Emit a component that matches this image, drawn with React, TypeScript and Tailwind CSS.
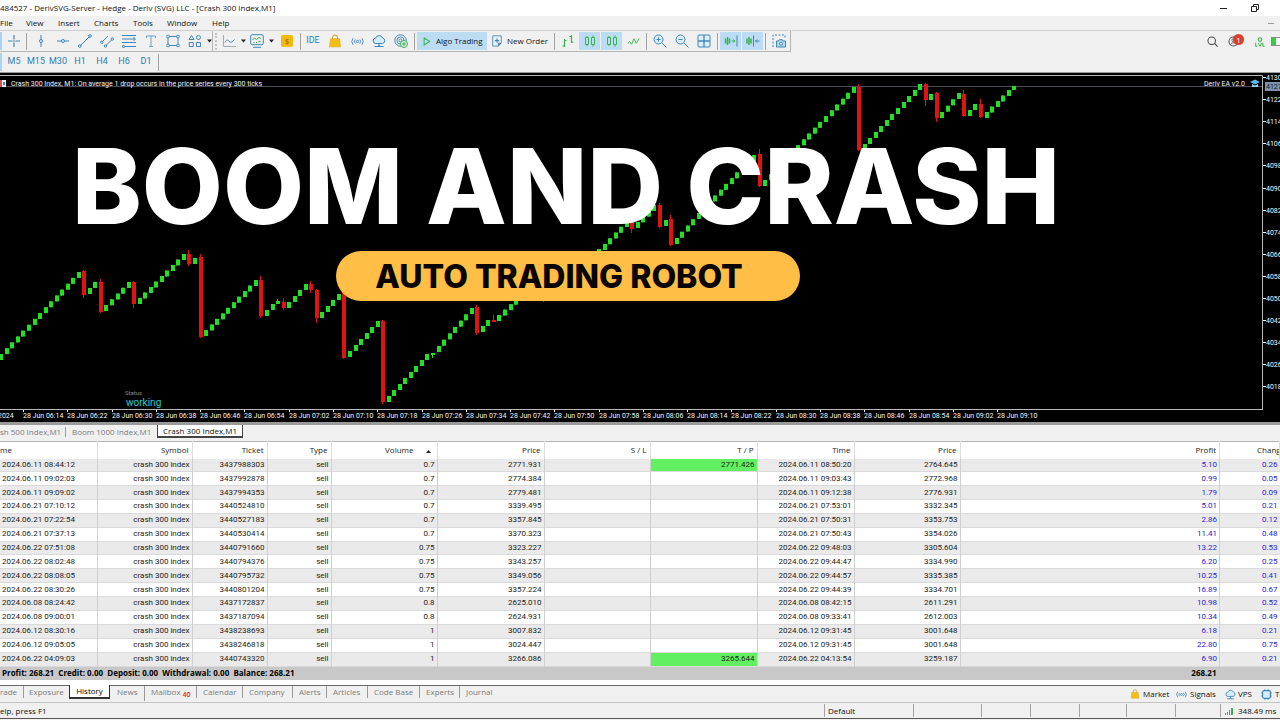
import type { ReactNode } from "react"
import clsx from "clsx"

type Candle = { i: number; up: boolean; top: number; bottom: number; high: number; low: number }

const STEP = 5.535

// Runs of rising candles: first index, first centre, last index, last centre
const RUNS: [number, number, number, number][] = [
  [0, 357, 14, 275],
  [16, 291, 17, 285],
  [19, 308, 23, 285],
  [25, 301, 33, 257],
  [35, 261, 35, 261],
  [37, 333, 46, 283],
  [48, 313, 49, 307],
  [52, 305, 55, 287],
  [58, 315, 61, 297],
  [63, 354, 68, 324],
  [70, 399, 77, 357],
  [79, 349, 85, 311],
  [87, 329, 88, 323],
  [90, 318, 97, 280],
  [99, 298, 108, 252],
  [109, 247, 113, 224],
  [115, 225, 118, 208],
  [120, 223, 120, 223],
  [122, 241, 126, 216],
  [127, 210, 136, 158],
  [138, 183, 154, 90],
  [156, 147, 166, 87],
  [168, 97, 168, 97],
  [170, 115, 173, 96],
  [175, 113, 176, 107],
  [178, 115, 182, 93],
]

// Drops: index, top, bottom, high, low
const DROPS: [number, number, number, number, number][] = [
  [15, 271, 295, 270, 298],
  [18, 282, 312, 279, 313],
  [24, 282, 304, 281, 308],
  [34, 254, 264, 250, 266],
  [36, 257, 337, 254, 338],
  [47, 280, 316, 276, 318],
  [51, 302, 308, 298, 310],
  [56, 284, 290, 281, 293],
  [57, 290, 318, 289, 323],
  [62, 286, 358, 285, 359],
  [69, 321, 402, 320, 404],
  [86, 307, 333, 305, 335],
  [89, 320, 322, 315, 322],
  [98, 280, 301, 279, 302],
  [114, 222, 229, 221, 233],
  [119, 205, 227, 203, 228],
  [121, 219, 245, 215, 246],
  [137, 154, 186, 149, 187],
  [155, 87, 150, 84, 151],
  [167, 84, 100, 83, 106],
  [169, 93, 118, 92, 122],
  [174, 94, 116, 90, 117],
  [177, 104, 117, 99, 118],
]

function buildCandles(): Candle[] {
  const out: Candle[] = []
  for (const [a, ya, b, yb] of RUNS) {
    for (let i = a; i <= b; i++) {
      const y = a === b ? ya : ya + ((yb - ya) * (i - a)) / (b - a)
      out.push({ i, up: true, top: y - 3, bottom: y + 3, high: y - 3, low: y + 3 })
    }
  }
  for (const [i, top, bottom, high, low] of DROPS) {
    out.push({ i, up: false, top, bottom, high, low })
  }
  out.push({ i: 50, up: true, top: 301, bottom: 304, high: 299, low: 304 })
  out.push({ i: 78, up: true, top: 353, bottom: 355, high: 353, low: 358 })
  out.push({ i: 183, up: true, top: 86, bottom: 90, high: 86, low: 90 })
  return out
}

const candles = buildCandles()

const times = [
  "06:14", "06:22", "06:30", "06:38", "06:46", "06:54", "07:02", "07:10", "07:18", "07:26", "07:34", "07:42",
  "07:50", "07:58", "08:06", "08:14", "08:22", "08:30", "08:38", "08:46", "08:54", "09:02", "09:10",
]

const prices = Array.from({ length: 15 }, (_, i) => 4130 - i * 8)

const trades = [
  ["2024.06.11 08:44:12", "3437988303", "0.7", "2771.931", "2771.426", "2024.06.11 08:50:20", "2764.645", "5.10", "0.26"],
  ["2024.06.11 09:02:03", "3437992878", "0.7", "2774.384", "", "2024.06.11 09:03:43", "2772.968", "0.99", "0.05"],
  ["2024.06.11 09:09:02", "3437994353", "0.7", "2779.481", "", "2024.06.11 09:12:38", "2776.931", "1.79", "0.09"],
  ["2024.06.21 07:10:12", "3440524810", "0.7", "3339.495", "", "2024.06.21 07:53:01", "3332.345", "5.01", "0.21"],
  ["2024.06.21 07:22:54", "3440527183", "0.7", "3357.845", "", "2024.06.21 07:50:31", "3353.753", "2.86", "0.12"],
  ["2024.06.21 07:37:13", "3440530414", "0.7", "3370.323", "", "2024.06.21 07:50:43", "3354.026", "11.41", "0.48"],
  ["2024.06.22 07:51:08", "3440791660", "0.75", "3323.227", "", "2024.06.22 09:48:03", "3305.604", "13.22", "0.53"],
  ["2024.06.22 08:02:48", "3440794376", "0.75", "3343.257", "", "2024.06.22 09:44:47", "3334.990", "6.20", "0.25"],
  ["2024.06.22 08:08:05", "3440795732", "0.75", "3349.056", "", "2024.06.22 09:44:57", "3335.385", "10.25", "0.41"],
  ["2024.06.22 08:30:26", "3440801204", "0.75", "3357.224", "", "2024.06.22 09:44:39", "3334.701", "16.89", "0.67"],
  ["2024.06.08 08:24:42", "3437172837", "0.8", "2625.010", "", "2024.06.08 08:42:15", "2611.291", "10.98", "0.52"],
  ["2024.06.08 09:00:01", "3437187094", "0.8", "2624.931", "", "2024.06.08 09:33:41", "2612.003", "10.34", "0.49"],
  ["2024.06.12 08:30:16", "3438238693", "1", "3007.832", "", "2024.06.12 09:31:45", "3001.648", "6.18", "0.21"],
  ["2024.06.12 09:05:05", "3438246818", "1", "3024.447", "", "2024.06.12 09:31:45", "3001.648", "22.80", "0.75"],
  ["2024.06.22 04:09:03", "3440743320", "1", "3266.086", "3265.644", "2024.06.22 04:13:54", "3259.187", "6.90", "0.21"],
]

function Icon({ children, size = 14, color = "#3f86b8" }: { children: ReactNode; size?: number; color?: string }) {
  return (
    <svg width={size} height={size} viewBox="0 0 14 14" fill="none" stroke={color} strokeWidth={1} className="shrink-0">
      {children}
    </svg>
  )
}

function Tool({ label, active, children }: { label: string; active?: boolean; children: ReactNode }) {
  return (
    <button
      aria-label={label}
      className={clsx("flex h-[18px] shrink-0 items-center justify-center", active ? "w-[21px] bg-[#bcdcf4]" : "w-[22px]")}
    >
      {children}
    </button>
  )
}

function Caret() {
  return (
    <button aria-label="More" className="flex w-[6px] shrink-0 items-center justify-center">
      <svg width="5" height="4" viewBox="0 0 5 4">
        <path d="M0 .5h5L2.500 3.500z" fill="#222" />
      </svg>
    </button>
  )
}

function Sep({ className }: { className?: string }) {
  return <span className={clsx("h-[17px] w-px shrink-0 bg-[#a3a3a3]", className)} />
}

function Bag({ size = 14 }: { size?: number }) {
  return (
    <Icon size={size}>
      <path d="M4.500 6V3.500a2.500 2.500 0 0 1 5 0V6" stroke="#c79a10" />
      <path d="M2.500 4.800h9l1 8h-11z" fill="#f5bd14" stroke="#dba50c" strokeWidth=".6" />
    </Icon>
  )
}

function SignalIcon({ size = 13 }: { size?: number }) {
  return (
    <Icon size={size}>
      <circle cx="7" cy="7" r="1.200" />
      <path d="M4.600 4.800a3.200 3.200 0 0 0 0 4.400M9.400 4.800a3.200 3.200 0 0 1 0 4.400M2.200 3.500a5.600 5.600 0 0 0 0 7M11.800 3.500a5.600 5.600 0 0 1 0 7" />
    </Icon>
  )
}

function CloudIcon({ size = 14 }: { size?: number }) {
  return (
    <Icon size={size}>
      <path d="M4 9.500a2.700 2.700 0 0 1-.4-5.400 3.700 3.700 0 0 1 7-.1 2.800 2.800 0 0 1-.2 5.500z" fill="#d5ebf8" />
      <path d="M7 9.500v2.500M2.500 12.500h9M5.500 12.500l1.500-1.200 1.500 1.200" />
    </Icon>
  )
}

function CandlePair() {
  return (
    <Icon color="#35b44a">
      <path d="M2.500 3.500h3v7h-3zM4 2v1.500M4 10.500V12M8.500 3.500h3v7h-3zM10 1.500v2M10 10.500v2" />
    </Icon>
  )
}

function TitleBar() {
  return (
    <header className="flex h-4 items-center justify-between bg-white text-[8px] text-[#111]">
      <h1>484527 - DerivSVG-Server - Hedge - Deriv (SVG) LLC - [Crash 300 Index,M1]</h1>
      <div className="flex items-center gap-6 pr-[21px]">
        <button aria-label="Minimize">
          <svg width="7" height="8" viewBox="0 0 7 8"><path d="M0 4.500h7" stroke="#222" /></svg>
        </button>
        <button aria-label="Restore">
          <svg width="8" height="8" viewBox="0 0 8 8" fill="none" stroke="#222"><path d="M.5 2.500h5v5h-5zM2.500 2.500v-2h5v5h-2" /></svg>
        </button>
      </div>
    </header>
  )
}

const menus = [
  ["File", "w-[26px]"], ["View", "w-8"], ["Insert", "w-9"], ["Charts", "w-[39px]"],
  ["Tools", "w-[34px]"], ["Window", "w-[45px]"], ["Help", "w-8"],
]

function MenuBar() {
  return (
    <nav className="flex h-[15px] items-center border-b border-[#cfcfcf] text-[8px] text-[#111]">
      {menus.map(([m, w]) => (
        <button key={m} className={clsx("shrink-0 text-left", w)}>{m}</button>
      ))}
      <span className="ml-auto mr-[6px] h-px w-[6px] bg-[#999]" />
    </nav>
  )
}

function Toolbar() {
  return (
    <div className="flex h-[21px] items-center">
      <div className="flex h-full items-center border-b border-r border-[#b5b5b5]">
        <span className="mr-px h-[18px] w-[2px] bg-[#a9d3f2]" />
        <Tool label="Crosshair"><Icon><path d="M7 1v4.500M7 8.500V13M1 7h4.500M8.500 7H13" strokeWidth="1.200" /><path d="M6 7h2M7 6v2" strokeWidth=".6" /></Icon></Tool>
        <Sep className="ml-px mr-[3px]" />
        <Tool label="Vertical line"><Icon><path d="M7 1v4.500M7 8.500V13" /><circle cx="7" cy="7" r="1.500" /></Icon></Tool>
        <Tool label="Horizontal line"><Icon><path d="M1 7h4.500M8.500 7H13" /><circle cx="7" cy="7" r="1.500" /></Icon></Tool>
        <Tool label="Trendline"><Icon><path d="M2.500 11.500l9-9" /><circle cx="1.800" cy="12" r="1.300" /><circle cx="12" cy="2" r="1.300" /></Icon></Tool>
        <Tool label="Channel"><Icon><path d="M2.500 7.500l5.500-5.500M6.500 11l5-5" /><circle cx="1.800" cy="8.300" r="1.200" /><circle cx="5.500" cy="12" r="1.200" /><circle cx="12.300" cy="5" r="1.200" /></Icon></Tool>
        <Tool label="Fibonacci"><Icon><path d="M0 1.500h14M0 5h10M0 8.500h14M3 12.500h11" /><circle cx="12" cy="5" r="1.200" /><circle cx="1.500" cy="12.500" r="1.200" /></Icon></Tool>
        <Tool label="Text"><Icon color="#6ba3cb"><path d="M2.500 4V2h9v2M7 2v10.500M5 12.500h4" /></Icon></Tool>
        <Tool label="Rectangle"><Icon><path d="M2 2.500h10v9H2z" /><path d="M.8 1.300h2.400v2.400H.8zM10.800 1.300h2.400v2.400h-2.400zM.8 10.300h2.400v2.400H.8zM10.800 10.300h2.400v2.400h-2.400z" fill="#f0f0f0" strokeWidth=".8" /></Icon></Tool>
        <Tool label="Shapes"><Icon><path d="M3.500 1.500L6 5.500H1zM1.300 8.500h4v4h-4zM8.500 8.500h4v4h-4z" /><circle cx="10.500" cy="3.500" r="2" /></Icon></Tool>
        <Caret />
      </div>
      <div className="flex h-full items-center border-b border-r border-[#b5b5b5]">
        <span className="ml-[2px] mr-px h-[17px] border-l-2 border-dotted border-[#c4c4c4]" />
        <Tool label="Chart type"><Icon><path d="M1.500 1v11.500H14" stroke="#a9a9a9" /><path d="M3 8.500c1.500-3 2.500-3 4-1.300s3 1.300 5.500-1.700" /></Icon></Tool>
        <Caret />
        <Tool label="Indicators"><Icon><rect x=".7" y=".7" width="12.600" height="10" rx="1.500" /><path d="M3 13.300h8" /><path d="M2.500 6l2-2 2 1.500 2.500-2 2 1M3.500 8.500h1M6 8.500h1M8.500 7.500h2" stroke="#35b44a" /></Icon></Tool>
        <Caret />
        <span className="w-[2px]" />
        <Tool label="Currency">
          <span className="flex h-3 w-3 items-center justify-center rounded-[2px] bg-[#f2b90f] text-[8px] leading-none text-[#8a6400]">$</span>
        </Tool>
        <Sep className="ml-[2px] mr-px" />
        <Tool label="IDE"><span className="font-['Roboto'] text-[9px] text-[#2f7db3]">IDE</span></Tool>
        <Tool label="Market"><Bag /></Tool>
        <Tool label="Signals"><SignalIcon /></Tool>
        <Tool label="Cloud"><CloudIcon /></Tool>
        <Tool label="Network"><Icon><circle cx="6.500" cy="6.500" r="5.700" /><circle cx="6.500" cy="6.500" r="3.600" /><circle cx="6.500" cy="6.500" r="1.500" /><circle cx="10" cy="10" r="3.500" fill="#f0f0f0" stroke="#35b44a" /><path d="M10 8v4M8 10h4" stroke="#35b44a" /></Icon></Tool>
        <Sep className="mx-[2px]" />
        <button className="flex h-[18px] w-[70px] shrink-0 items-center gap-1 whitespace-nowrap bg-[#bcdcf4] pl-[4px] text-[8px] text-[#111]">
          <Icon size={11} color="#35b44a"><path d="M4 2.500l7 4.500-7 4.500z" strokeWidth="1.300" /></Icon>
          Algo Trading
        </button>
        <button className="ml-[4px] flex h-[18px] w-[61px] shrink-0 items-center gap-1 whitespace-nowrap text-[8px] text-[#111]">
          <Icon size={12}><path d="M2 1h10v8l-3.500 4H2z" /><path d="M7 4v5M4.500 6.500h5" strokeWidth="1.300" /><path d="M8.500 13V9.500H12" fill="#3f86b8" /></Icon>
          New Order
        </button>
        <Sep className="mx-[2px]" />
        <Tool label="Bar chart"><Icon color="#35b44a"><path d="M3.500 5v8M1.500 12h2M3.500 6.500h2M10.500 1v8M8.500 2.500h2M10.500 8h2" strokeWidth="1.200" /></Icon></Tool>
        <Tool label="Candles" active><CandlePair /></Tool>
        <span className="w-px" />
        <Tool label="Hollow candles" active><CandlePair /></Tool>
        <Tool label="Line chart"><Icon size={13} color="#35b44a"><path d="M1 9l2-2 2 3 2.500-6 2.500 5 3-5" /></Icon></Tool>
        <Sep className="mx-[2px]" />
        <Tool label="Zoom in"><Icon><circle cx="5.500" cy="5.500" r="4.500" fill="#dcedf8" /><path d="M9 9l4.500 4.500M3.500 5.500h4M5.500 3.500v4" /></Icon></Tool>
        <Tool label="Zoom out"><Icon><circle cx="5.500" cy="5.500" r="4.500" fill="#dcedf8" /><path d="M9 9l4.500 4.500M3.500 5.500h4" /></Icon></Tool>
        <Tool label="Tile windows"><Icon><rect x="1" y="1" width="12" height="12" rx="1" fill="#dcedf8" /><path d="M7 1v12M1 7h12" strokeWidth="1.300" /></Icon></Tool>
        <Sep className="mx-[2px]" />
        <Tool label="Auto scroll" active><Icon color="#35b44a"><path d="M1.500 4.500v5M3.500 3v8M5.500 4.500v5" strokeWidth="1.500" /><path d="M7.500 7h3.500M9.500 5.500L11 7 9.500 8.500" /><path d="M13 1.500v11" stroke="#3f86b8" /></Icon></Tool>
        <span className="w-px" />
        <Tool label="Chart shift" active><Icon color="#35b44a"><path d="M1 4.500v5M3 3v8M5 4.500v5" strokeWidth="1.500" /><path d="M7.500 1.500v11M9.500 7H13.500M11 5.500L9.500 7l1.500 1.500" stroke="#3f86b8" /></Icon></Tool>
        <Sep className="mx-[2px]" />
        <Tool label="Screenshot"><Icon><path d="M1 13V1h12v3" strokeDasharray="2 1.500" /><path d="M4.500 7h2l.8-1.300h3L11 7h2.500v6h-9z" fill="#bcdcf4" /><circle cx="9" cy="9.800" r="1.600" fill="#f0f0f0" /></Icon></Tool>
      </div>
      <div className="ml-auto flex items-center">
        <button aria-label="Search" className="mr-[10px]"><Icon size={11} color="#444"><circle cx="6" cy="6" r="4.800" strokeWidth="1.300" /><path d="M9.500 9.500l4 4" strokeWidth="1.300" /></Icon></button>
        <button aria-label="Account" className="relative mr-[11px] w-[16px]">
          <Icon size={11} color="#555"><circle cx="7" cy="7" r="5.800" strokeWidth="1.300" /><circle cx="7" cy="5.500" r="2" /><path d="M3 11c1-3 7-3 8 0" /></Icon>
          <span className="absolute -top-[2px] right-0 flex h-[11px] w-[11px] items-center justify-center rounded-full bg-[#d8402a] text-[8px] leading-none text-white">1</span>
        </button>
        <button aria-label="Level" className="mr-[6px]"><Icon size={10} color="#35b44a"><circle cx="7" cy="3.500" r="2.500" strokeWidth="1.500" /><path d="M7 6v2M1 8v5h2.500M4.500 8.500L7 13l2.500-4.500M11 8v5h2.500" strokeWidth="1.400" /></Icon></button>
        <span className="flex h-[9px] w-[9px] border border-r-0 border-[#8a8a8a] bg-white"><span className="w-[4px] bg-[#2fd043]" /></span>
      </div>
    </div>
  )
}

function Timeframes() {
  return (
    <div className="flex h-[20px] items-center font-['Roboto'] text-[9px] text-[#2f7db3]">
      <span className="mr-px h-[18px] w-[2px] bg-[#a9d3f2]" />
      {["M5", "M15", "M30", "H1", "H4", "H6", "D1"].map((t) => (
        <button key={t} className="w-[22px] text-center">{t}</button>
      ))}
      <Sep className="ml-px" />
    </div>
  )
}

function Chart() {
  return (
    <section className="relative h-[353px] overflow-hidden border-b-[3px] border-t border-[#9a9a9a] bg-black">
      <svg width="1280" height="350" viewBox="0 73 1280 350" fontFamily="Roboto, sans-serif" fontSize="7" fill="#f4f4f4">
        <path d="M0 75.500H1262.500V409M0 409.500H1263" fill="none" stroke="#b8b8b8" />
        <path d="M0 86.500H1262" stroke="#4c4c58" />
        {candles.map((c) => {
          const x = Math.round(1.3 + c.i * STEP)
          const color = c.up ? "#22e022" : "#e01212"
          return (
            <g key={c.i} fill={color}>
              <rect x={x - 2} y={c.top} width={4} height={c.bottom - c.top} />
              <rect x={x - 1} y={c.high} width={1} height={c.low - c.high} />
            </g>
          )
        })}
        <text x="-2" y="418">2024</text>
        {times.map((t, i) => {
          const x = Math.round(23 + i * STEP * 8)
          return (
            <g key={t}>
              <rect x={x} y={410} width={1} height={2} />
              <text x={x} y={418}>28 Jun {t}</text>
            </g>
          )
        })}
        {prices.map((p, i) => {
          const y = Math.round(77 + i * 22.1)
          return (
            <g key={p}>
              <rect x={1263} y={y} width={3} height={1} />
              <text x={1266} y={y + 3}>{p}</text>
            </g>
          )
        })}
        <rect x="1265" y="82" width="15" height="9" fill="#7d93ad" />
        <text x="1266" y="89" fill="#101820">4127</text>
        <path d="M0 80h2v7H0z" fill="#e05050" />
        <path d="M2 80h4v7H2z" fill="#e8f2fb" />
        <path d="M3 82h2v3H3z" fill="#3f86b8" />
        <text x="11" y="86">Crash 300 Index, M1:  On average 1 drop occurs in the price series every 300 ticks</text>
        <text x="1204" y="86">Deriv EA v2.0</text>
        <path d="M1250 82l5-2.500 5 2.500-5 2.500z" fill="#5cb8f0" />
        <path d="M1252 84v3h6v-3l-3 1.500z" fill="#8fd0f8" />
        <text x="125" y="395" fill="#8a8a8a" fontSize="6">Status</text>
        <text x="126" y="406" fill="#22cfd6" fontSize="10">working</text>
      </svg>
      <h2 className="absolute left-[72px] top-[55px] whitespace-nowrap font-['Inter'] text-[105px] font-extrabold leading-[116px] text-white">
        BOOM AND CRASH
      </h2>
      <p className="absolute left-[336px] top-[178px] flex h-[50px] w-[464px] items-center justify-center whitespace-nowrap rounded-full bg-[#ffbe45] pr-[18px] pt-[2px] font-['Inter'] text-[32px] font-extrabold text-[#0a0500]">
        AUTO TRADING ROBOT
      </p>
    </section>
  )
}

function ChartTabs() {
  return (
    <div className="flex h-[16px] items-start text-[8px] text-[#7b7b7b]">
      <button className="w-[65px] text-left leading-[13px]">sh 500 Index,M1</button>
      <span className="mt-[2px] h-[10px] w-px bg-[#9a9a9a]" />
      <button className="w-[91px] whitespace-nowrap pl-[6px] text-left leading-[13px]">Boom 1000 Index,M1</button>
      <button className="h-[13px] w-[86px] whitespace-nowrap border border-b-2 border-t-0 border-[#444] bg-white leading-[11px] text-[#111]">Crash 300 Index,M1</button>
    </div>
  )
}

const headers = ["me", "Symbol", "Ticket", "Type", "Volume", "Price", "S / L", "T / P", "Time", "Price", "Profit", "Change"]
const cols = [
  "w-[97px]", "w-[95px]", "w-[75px]", "w-[64px]", "w-[106px]", "w-[107px]", "w-[106px]", "w-[107px]", "w-[97px]", "w-[106px]", "", "w-[60px]",
]

function History() {
  return (
    <table className="h-[239px] w-full table-fixed border-collapse border-t border-[#b5b5b5] bg-white text-right text-[#1c1c1c]">
      <colgroup>
        {cols.map((c, i) => <col key={i} className={c} />)}
      </colgroup>
      <thead>
        <tr className="h-[17px] text-[8px] leading-[12px]">
          {headers.map((h, i) => (
            <th
              key={i}
              className={clsx(
                "overflow-hidden whitespace-nowrap border-r border-[#dedede] p-0 font-normal",
                i === 0 ? "text-left" : i === 11 ? "pl-[37px] text-left" : "pr-[3px]"
              )}
            >
              {h}
              {h === "Volume" && (
                <svg width="5" height="3" viewBox="0 0 5 3" className="ml-3 mr-[3px] inline-block align-middle"><path d="M0 3L2.500 0 5 3z" fill="#222" /></svg>
              )}
            </th>
          ))}
        </tr>
      </thead>
      <tbody className="font-['Roboto',sans-serif] text-[8px] leading-[12px]">
        {trades.map(([open, ticket, volume, price, tp, close, closePrice, profit, change]) => (
          <tr key={ticket} className="border-b border-[#dadada] odd:bg-[#eaeaea]">
            <td className="border-r border-[#d0d0d0] p-0 pl-[2px] text-left">{open}</td>
            <td className="border-r border-[#d0d0d0] p-0 pr-[2px]">crash 300 index</td>
            <td className="border-r border-[#d0d0d0] p-0 pr-[2px]">{ticket}</td>
            <td className="border-r border-[#d0d0d0] p-0 pr-[2px]">sell</td>
            <td className="border-r border-[#d0d0d0] p-0 pr-[2px]">{volume}</td>
            <td className="border-r border-[#d0d0d0] p-0 pr-[2px]">{price}</td>
            <td className="border-r border-[#d0d0d0] p-0" />
            <td className={clsx("border-r border-[#d0d0d0] p-0 pr-[2px]", tp && "bg-[#62f062]")}>{tp}</td>
            <td className="border-r border-[#d0d0d0] p-0 pr-[2px]">{close}</td>
            <td className="border-r border-[#d0d0d0] p-0 pr-[2px]">{closePrice}</td>
            <td className="border-r border-[#d0d0d0] p-0 pr-[2px] text-[#2b22d8]">{profit}</td>
            <td className="p-0 pr-[2px] text-[#2b22d8]">{change}</td>
          </tr>
        ))}
      </tbody>
      <tfoot>
        <tr className="h-[14px] bg-[#c8c8c8] text-[8px] font-bold leading-[12px] text-black">
          <td colSpan={10} className="whitespace-pre p-0 pl-[2px] text-left">Profit: 268.21  Credit: 0.00  Deposit: 0.00  Withdrawal: 0.00  Balance: 268.21</td>
          <td className="p-0 pr-[3px]">268.21</td>
          <td />
        </tr>
      </tfoot>
    </table>
  )
}

const panels = [
  ["Mailbox", "w-[52px]"], ["Calendar", "w-[46px]"], ["Company", "w-[50px]"], ["Alerts", "w-[34px]"],
  ["Articles", "w-[41px]"], ["Code Base", "w-[52px]"], ["Experts", "w-[40px]"],
]

function BottomTabs() {
  return (
    <div className="flex h-[18px] items-start border-b border-t border-b-[#c4c4c4] border-t-[#6a6a6a] text-[8px] leading-[12px] text-[#7b7b7b]">
      <button className="w-[23px] text-left">rade</button>
      <button className="w-[46px] whitespace-nowrap border-l border-[#9a9a9a] pl-[5px] text-left">Exposure</button>
      <button className="-mt-px h-[14px] w-[41px] border border-b-2 border-t-0 border-[#333] bg-white font-medium text-black">History</button>
      <button className="w-[34px] pl-[7px] text-left">News</button>
      {panels.map(([p, w]) => (
        <button key={p} className={clsx("flex shrink-0 whitespace-nowrap border-l border-[#9a9a9a] pl-[6px]", w)}>
          {p}
          {p === "Mailbox" && <span className="ml-[2px] mt-[3px] text-[7px] font-semibold text-[#e02020]">40</span>}
        </button>
      ))}
      <button className="border-l border-[#9a9a9a] pl-[6px]">Journal</button>
      <div className="ml-auto flex h-full w-[150px] items-center overflow-hidden whitespace-nowrap text-[#111]">
        <button className="flex w-[46px] shrink-0 items-center gap-[3px]"><Bag size={10} />Market</button>
        <button className="flex w-[49px] shrink-0 items-center gap-[3px]"><SignalIcon size={11} />Signals</button>
        <button className="flex w-[36px] shrink-0 items-center gap-[2px]"><CloudIcon size={11} />VPS</button>
        <button className="flex shrink-0 items-center gap-[3px]">
          <Icon size={11}><rect x="2" y="2" width="10" height="10" rx="2" fill="#d5ebf8" strokeWidth="1.500" /><path d="M5 0v2M9 0v2M5 12v2M9 12v2M0 5h2M0 9h2M12 5h2M12 9h2" /></Icon>
          Tester
        </button>
      </div>
    </div>
  )
}

function StatusBar() {
  return (
    <footer className="flex h-[16px] items-center border-b border-[#555] text-[8px] text-[#111]">
      <span className="flex-1">elp, press F1</span>
      <span className="flex h-[13px] w-[89px] items-center border-l border-[#a3a3a3] pl-[3px]">Default</span>
      <span className="h-[13px] w-[68px] border-l border-[#a3a3a3]" />
      <span className="h-[13px] w-[49px] border-l border-[#a3a3a3]" />
      <span className="h-[13px] w-[49px] border-l border-[#a3a3a3]" />
      <span className="h-[13px] w-[47px] border-l border-[#a3a3a3]" />
      <span className="h-[13px] w-[49px] border-l border-[#a3a3a3]" />
      <span className="h-[13px] w-[45px] border-l border-[#a3a3a3]" />
      <span className="flex h-[13px] w-[60px] items-center gap-[5px] whitespace-nowrap border-l border-[#a3a3a3] pl-1">
        <svg width="8" height="8" viewBox="0 0 8 8" fill="#35b44a"><path d="M0 6h1v2H0zM2 5h1v3H2zM4 3h1v5H4zM6 1h2v7H6z" /></svg>
        348.49 ms
      </span>
    </footer>
  )
}

export default function App() {
  return (
    <main className="flex min-h-screen w-full flex-col overflow-hidden bg-[#f0f0f0] font-['Open_Sans',sans-serif]">
      <TitleBar />
      <MenuBar />
      <Toolbar />
      <Timeframes />
      <Chart />
      <ChartTabs />
      <div className="bg-white pb-[5px]">
        <History />
      </div>
      <BottomTabs />
      <StatusBar />
    </main>
  )
}
